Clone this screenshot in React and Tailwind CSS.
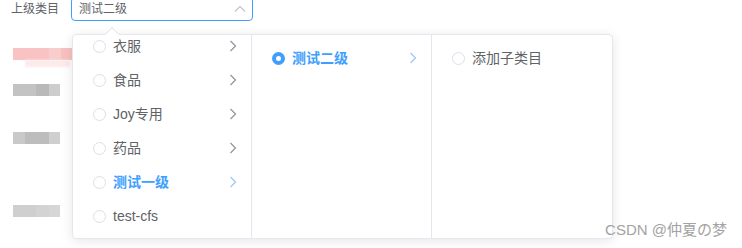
import React from "react";

const FONT = { fontFamily: '"Liberation Sans", "Noto Sans CJK SC", sans-serif' };

function Chevron({ color = "#a8abb2" }) {
  return (
    <svg width="8" height="12" viewBox="0 0 8 12" className="shrink-0">
      <path d="M1.5 1 L6.5 6 L1.5 11" fill="none" stroke={color} strokeWidth="1.2" />
    </svg>
  );
}

function Radio({ checked }) {
  if (checked) {
    return (
      <span className="w-[13px] h-[13px] rounded-full bg-[#409eff] flex items-center justify-center shrink-0">
        <span className="w-[5px] h-[5px] rounded-full bg-white" />
      </span>
    );
  }
  return <span className="w-[13px] h-[13px] rounded-full border border-[#dcdfe6] bg-white shrink-0" />;
}

function Item({ label, checked, active, arrow }) {
  const blue = checked || active;
  return (
    <div className="h-[34px] flex items-center pl-[20px] pr-[14px]">
      <Radio checked={checked} />
      <span
        className={
          "ml-[7px] text-[14px] " + (blue ? "text-[#409eff] font-bold" : "text-[#606266]")
        }
      >
        {label}
      </span>
      {arrow && (
        <span className="ml-auto">
          <Chevron color={blue ? "#9fc4f0" : "#909399"} />
        </span>
      )}
    </div>
  );
}

function Blur({ top, segs }) {
  return (
    <div className="absolute left-[13px] flex blur-[0.6px]" style={{ top }}>
      {segs.map((c, i) => (
        <div key={i} className="h-[12px]" style={{ width: c[1], background: c[0] }} />
      ))}
    </div>
  );
}

export default function App() {
  return (
    <div className="relative w-[742px] h-[248px] bg-white overflow-hidden" style={FONT}>
      <div className="flex items-center mt-[-3px]">
        <div className="w-[71px] pl-[11px] text-[12px] text-[#606266]">上级类目</div>
        <div className="w-[182px] h-[24px] border border-[#409eff] rounded-[4px] flex items-center pl-[7px] pr-[6px]">
          <span className="text-[12px] text-[#606266]">测试二级</span>
          <svg className="ml-auto" width="12" height="8" viewBox="0 0 12 8">
            <path d="M1 6.5 L6 1.5 L11 6.5" fill="none" stroke="#c0c4cc" strokeWidth="1.2" />
          </svg>
        </div>
      </div>

      <Blur top={48} segs={[["#fac3c3", 36], ["#f8cdcd", 12], ["#f9c0c0", 11]]} />
      <div className="absolute left-[25px] top-[60px] w-[45px] h-[7px] bg-[#fdeaea] blur-[1px]" />
      <Blur top={84} segs={[["#c3c3c3", 23], ["#b9b9b9", 13], ["#cdcdcd", 11]]} />
      <Blur top={132} segs={[["#c9c9c9", 12], ["#bdbdbd", 24], ["#cfcfcf", 11]]} />
      <Blur top={205} segs={[["#cfcfcf", 23], ["#d3d3d3", 13], ["#d6d6d6", 11]]} />

      <div className="absolute left-[72px] top-[34px] w-[541px] h-[205px] bg-white border border-[#e4e7ed] rounded-[4px] shadow-[0_2px_12px_0_rgba(0,0,0,0.1)] flex">
        <div className="absolute left-[34px] top-[-6px] w-[10px] h-[10px] bg-white border-l border-t border-[#e4e7ed] rotate-45" />
        <div className="w-[179px] h-full border-r border-[#e4e7ed] overflow-hidden">
          <div className="pt-[6px] mt-[-12px]">
            <Item label="衣服" arrow />
            <Item label="食品" arrow />
            <Item label="Joy专用" arrow />
            <Item label="药品" arrow />
            <Item label="测试一级" arrow active />
            <Item label="test-cfs" />
          </div>
        </div>
        <div className="w-[180px] h-full border-r border-[#e4e7ed]">
          <div className="pt-[6px]">
            <Item label="测试二级" arrow checked />
          </div>
        </div>
        <div className="flex-1 h-full">
          <div className="pt-[6px]">
            <Item label="添加子类目" />
          </div>
        </div>
      </div>

      <div className="absolute right-[15px] bottom-[7px] text-[15px] text-[#a3a3a3]">CSDN @仲夏の梦</div>
    </div>
  );
}
